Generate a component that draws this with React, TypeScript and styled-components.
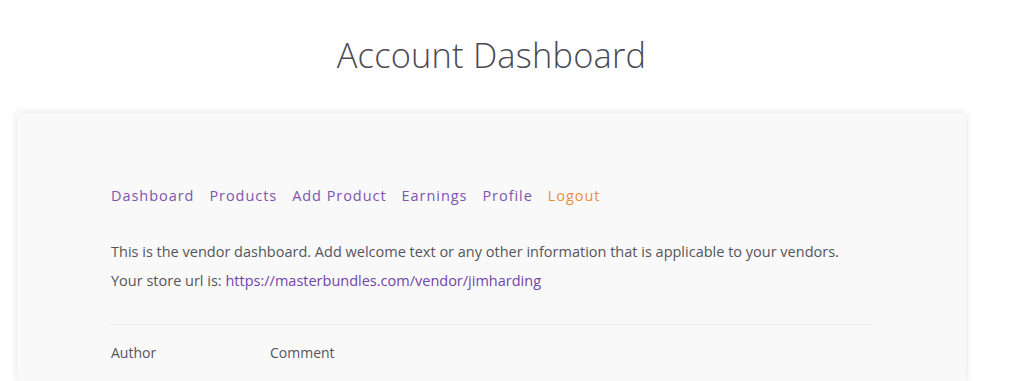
import React from "react";
import styled, { createGlobalStyle } from "styled-components";

const Global = createGlobalStyle`
  html, body { margin: 0; padding: 0; background: #ffffff; }
  body { font-family: "Open Sans", "Noto Sans", sans-serif; color: #555; }
`;

const Page = styled.div`
  width: 949px;
  margin-left: 17px;
`;

const Title = styled.h1`
  margin: 0;
  padding-top: 32px;
  height: 113px;
  box-sizing: border-box;
  text-align: center;
  font-weight: 300;
  font-size: 34.4px;
  line-height: 46px;
  color: #4b4a55;
  letter-spacing: 0.2px;
`;

const Card = styled.section`
  background: #f9f9f9;
  box-shadow: 0 0 8px rgba(0, 0, 0, 0.12);
  padding: 69px 94px 0;
  height: 268px;
  box-sizing: border-box;
`;

const Nav = styled.nav`
  display: flex;
  gap: 15px;
  height: 26px;
  align-items: center;
`;

const NavLink = styled.a<{ $accent?: boolean }>`
  font-size: 14.5px;
  letter-spacing: 0.95px;
  color: ${(p) => (p.$accent ? "#ec8d3c" : "#7d54b0")};
  text-decoration: none;
`;

const Intro = styled.div`
  margin-top: 29px;
  font-size: 14.5px;
  line-height: 29px;
  color: #555459;
`;

const Url = styled.a`
  color: #6f46a8;
  text-decoration: none;
`;

const Divider = styled.hr`
  border: none;
  border-top: 1px solid #ececec;
  margin: 29px 0 0;
`;

const TableHead = styled.div`
  display: grid;
  grid-template-columns: 159px 1fr;
  padding-top: 18px;
  font-size: 14px;
  line-height: 20px;
  color: #555459;
`;

export default function App() {
  return (
    <>
      <Global />
      <Page>
        <Title>Account Dashboard</Title>
        <Card>
          <Nav>
            <NavLink href="#">Dashboard</NavLink>
            <NavLink href="#">Products</NavLink>
            <NavLink href="#">Add Product</NavLink>
            <NavLink href="#">Earnings</NavLink>
            <NavLink href="#">Profile</NavLink>
            <NavLink href="#" $accent>Logout</NavLink>
          </Nav>
          <Intro>
            <div>This is the vendor dashboard. Add welcome text or any other information that is applicable to your vendors.</div>
            <div>
              Your store url is: <Url href="#">https://masterbundles.com/vendor/jimharding</Url>
            </div>
          </Intro>
          <Divider />
          <TableHead>
            <span>Author</span>
            <span>Comment</span>
          </TableHead>
        </Card>
      </Page>
    </>
  );
}
